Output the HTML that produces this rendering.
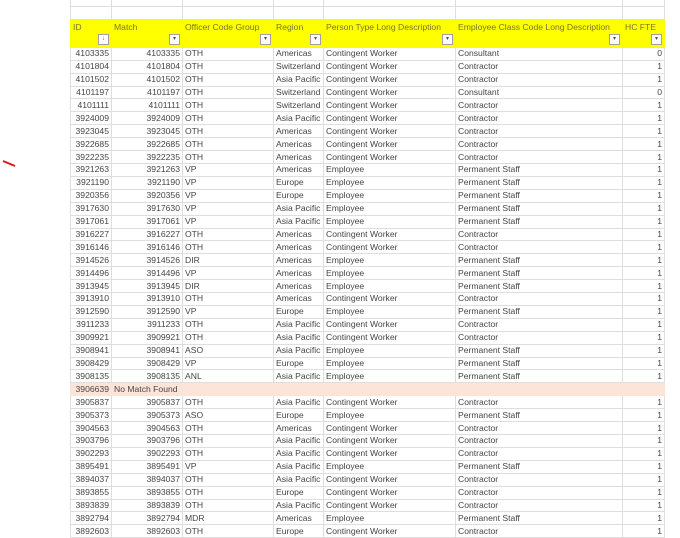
<!DOCTYPE html>
<html><head><style>
body{margin:0;width:680px;height:537px;background:#fff;overflow:hidden;position:relative;font-family:"Liberation Sans",sans-serif;}
table{position:absolute;left:70px;top:-7px;border-collapse:collapse;table-layout:fixed;font-size:8.6px;color:#454545;}
td{border:1px solid #dedede;padding:0 2px;height:11.92px;line-height:11px;white-space:nowrap;overflow:hidden;}
.r,tr td:first-child{text-align:right}
tr.h td{background:#ffff00;border-color:#ffff00;color:#77772a;vertical-align:top;position:relative;height:25px;padding-top:2px;border-bottom-color:#dedede;text-align:left}
tr.h td span{position:absolute;right:2px;bottom:2px;width:9px;height:9px;border:1px solid #a0a0a0;background:#fff;font-size:6px;line-height:9px;text-align:center;color:#555}
tr.nm td{background:#fde4d8;border-color:#fde4d8}
</style></head><body>
<svg style="position:absolute;left:0;top:0" width="20" height="180"><line x1="3" y1="161" x2="15" y2="166" stroke="#e0141e" stroke-width="2"/></svg>
<table>
<colgroup><col style="width:41px"><col style="width:71px"><col style="width:91px"><col style="width:50px"><col style="width:132px"><col style="width:167px"><col style="width:42px"></colgroup>
<tr><td></td><td></td><td></td><td></td><td></td><td></td><td></td></tr>
<tr><td></td><td></td><td></td><td></td><td></td><td></td><td></td></tr>
<tr class="h"><td>ID<span>↓</span></td><td>Match<span>▾</span></td><td>Officer Code Group<span>▾</span></td><td>Region<span>▾</span></td><td>Person Type Long Description<span>▾</span></td><td>Employee Class Code Long Description<span>▾</span></td><td>HC FTE<span>▾</span></td></tr>
<tr><td>4103335</td><td class="r">4103335</td><td>OTH</td><td>Americas</td><td>Contingent Worker</td><td>Consultant</td><td class="r">0</td></tr>
<tr><td>4101804</td><td class="r">4101804</td><td>OTH</td><td>Switzerland</td><td>Contingent Worker</td><td>Contractor</td><td class="r">1</td></tr>
<tr><td>4101502</td><td class="r">4101502</td><td>OTH</td><td>Asia Pacific</td><td>Contingent Worker</td><td>Contractor</td><td class="r">1</td></tr>
<tr><td>4101197</td><td class="r">4101197</td><td>OTH</td><td>Switzerland</td><td>Contingent Worker</td><td>Consultant</td><td class="r">0</td></tr>
<tr><td>4101111</td><td class="r">4101111</td><td>OTH</td><td>Switzerland</td><td>Contingent Worker</td><td>Contractor</td><td class="r">1</td></tr>
<tr><td>3924009</td><td class="r">3924009</td><td>OTH</td><td>Asia Pacific</td><td>Contingent Worker</td><td>Contractor</td><td class="r">1</td></tr>
<tr><td>3923045</td><td class="r">3923045</td><td>OTH</td><td>Americas</td><td>Contingent Worker</td><td>Contractor</td><td class="r">1</td></tr>
<tr><td>3922685</td><td class="r">3922685</td><td>OTH</td><td>Americas</td><td>Contingent Worker</td><td>Contractor</td><td class="r">1</td></tr>
<tr><td>3922235</td><td class="r">3922235</td><td>OTH</td><td>Americas</td><td>Contingent Worker</td><td>Contractor</td><td class="r">1</td></tr>
<tr><td>3921263</td><td class="r">3921263</td><td>VP</td><td>Americas</td><td>Employee</td><td>Permanent Staff</td><td class="r">1</td></tr>
<tr><td>3921190</td><td class="r">3921190</td><td>VP</td><td>Europe</td><td>Employee</td><td>Permanent Staff</td><td class="r">1</td></tr>
<tr><td>3920356</td><td class="r">3920356</td><td>VP</td><td>Europe</td><td>Employee</td><td>Permanent Staff</td><td class="r">1</td></tr>
<tr><td>3917630</td><td class="r">3917630</td><td>VP</td><td>Asia Pacific</td><td>Employee</td><td>Permanent Staff</td><td class="r">1</td></tr>
<tr><td>3917061</td><td class="r">3917061</td><td>VP</td><td>Asia Pacific</td><td>Employee</td><td>Permanent Staff</td><td class="r">1</td></tr>
<tr><td>3916227</td><td class="r">3916227</td><td>OTH</td><td>Americas</td><td>Contingent Worker</td><td>Contractor</td><td class="r">1</td></tr>
<tr><td>3916146</td><td class="r">3916146</td><td>OTH</td><td>Americas</td><td>Contingent Worker</td><td>Contractor</td><td class="r">1</td></tr>
<tr><td>3914526</td><td class="r">3914526</td><td>DIR</td><td>Americas</td><td>Employee</td><td>Permanent Staff</td><td class="r">1</td></tr>
<tr><td>3914496</td><td class="r">3914496</td><td>VP</td><td>Americas</td><td>Employee</td><td>Permanent Staff</td><td class="r">1</td></tr>
<tr><td>3913945</td><td class="r">3913945</td><td>DIR</td><td>Americas</td><td>Employee</td><td>Permanent Staff</td><td class="r">1</td></tr>
<tr><td>3913910</td><td class="r">3913910</td><td>OTH</td><td>Americas</td><td>Contingent Worker</td><td>Contractor</td><td class="r">1</td></tr>
<tr><td>3912590</td><td class="r">3912590</td><td>VP</td><td>Europe</td><td>Employee</td><td>Permanent Staff</td><td class="r">1</td></tr>
<tr><td>3911233</td><td class="r">3911233</td><td>OTH</td><td>Asia Pacific</td><td>Contingent Worker</td><td>Contractor</td><td class="r">1</td></tr>
<tr><td>3909921</td><td class="r">3909921</td><td>OTH</td><td>Asia Pacific</td><td>Contingent Worker</td><td>Contractor</td><td class="r">1</td></tr>
<tr><td>3908941</td><td class="r">3908941</td><td>ASO</td><td>Asia Pacific</td><td>Employee</td><td>Permanent Staff</td><td class="r">1</td></tr>
<tr><td>3908429</td><td class="r">3908429</td><td>VP</td><td>Europe</td><td>Employee</td><td>Permanent Staff</td><td class="r">1</td></tr>
<tr><td>3908135</td><td class="r">3908135</td><td>ANL</td><td>Asia Pacific</td><td>Employee</td><td>Permanent Staff</td><td class="r">1</td></tr>
<tr class="nm"><td>3906639</td><td colspan="2">No Match Found</td><td></td><td></td><td></td><td></td></tr>
<tr><td>3905837</td><td class="r">3905837</td><td>OTH</td><td>Asia Pacific</td><td>Contingent Worker</td><td>Contractor</td><td class="r">1</td></tr>
<tr><td>3905373</td><td class="r">3905373</td><td>ASO</td><td>Europe</td><td>Employee</td><td>Permanent Staff</td><td class="r">1</td></tr>
<tr><td>3904563</td><td class="r">3904563</td><td>OTH</td><td>Americas</td><td>Contingent Worker</td><td>Contractor</td><td class="r">1</td></tr>
<tr><td>3903796</td><td class="r">3903796</td><td>OTH</td><td>Asia Pacific</td><td>Contingent Worker</td><td>Contractor</td><td class="r">1</td></tr>
<tr><td>3902293</td><td class="r">3902293</td><td>OTH</td><td>Asia Pacific</td><td>Contingent Worker</td><td>Contractor</td><td class="r">1</td></tr>
<tr><td>3895491</td><td class="r">3895491</td><td>VP</td><td>Asia Pacific</td><td>Employee</td><td>Permanent Staff</td><td class="r">1</td></tr>
<tr><td>3894037</td><td class="r">3894037</td><td>OTH</td><td>Asia Pacific</td><td>Contingent Worker</td><td>Contractor</td><td class="r">1</td></tr>
<tr><td>3893855</td><td class="r">3893855</td><td>OTH</td><td>Europe</td><td>Contingent Worker</td><td>Contractor</td><td class="r">1</td></tr>
<tr><td>3893839</td><td class="r">3893839</td><td>OTH</td><td>Asia Pacific</td><td>Contingent Worker</td><td>Contractor</td><td class="r">1</td></tr>
<tr><td>3892794</td><td class="r">3892794</td><td>MDR</td><td>Americas</td><td>Employee</td><td>Permanent Staff</td><td class="r">1</td></tr>
<tr><td>3892603</td><td class="r">3892603</td><td>OTH</td><td>Europe</td><td>Contingent Worker</td><td>Contractor</td><td class="r">1</td></tr>
</table>
</body></html>
